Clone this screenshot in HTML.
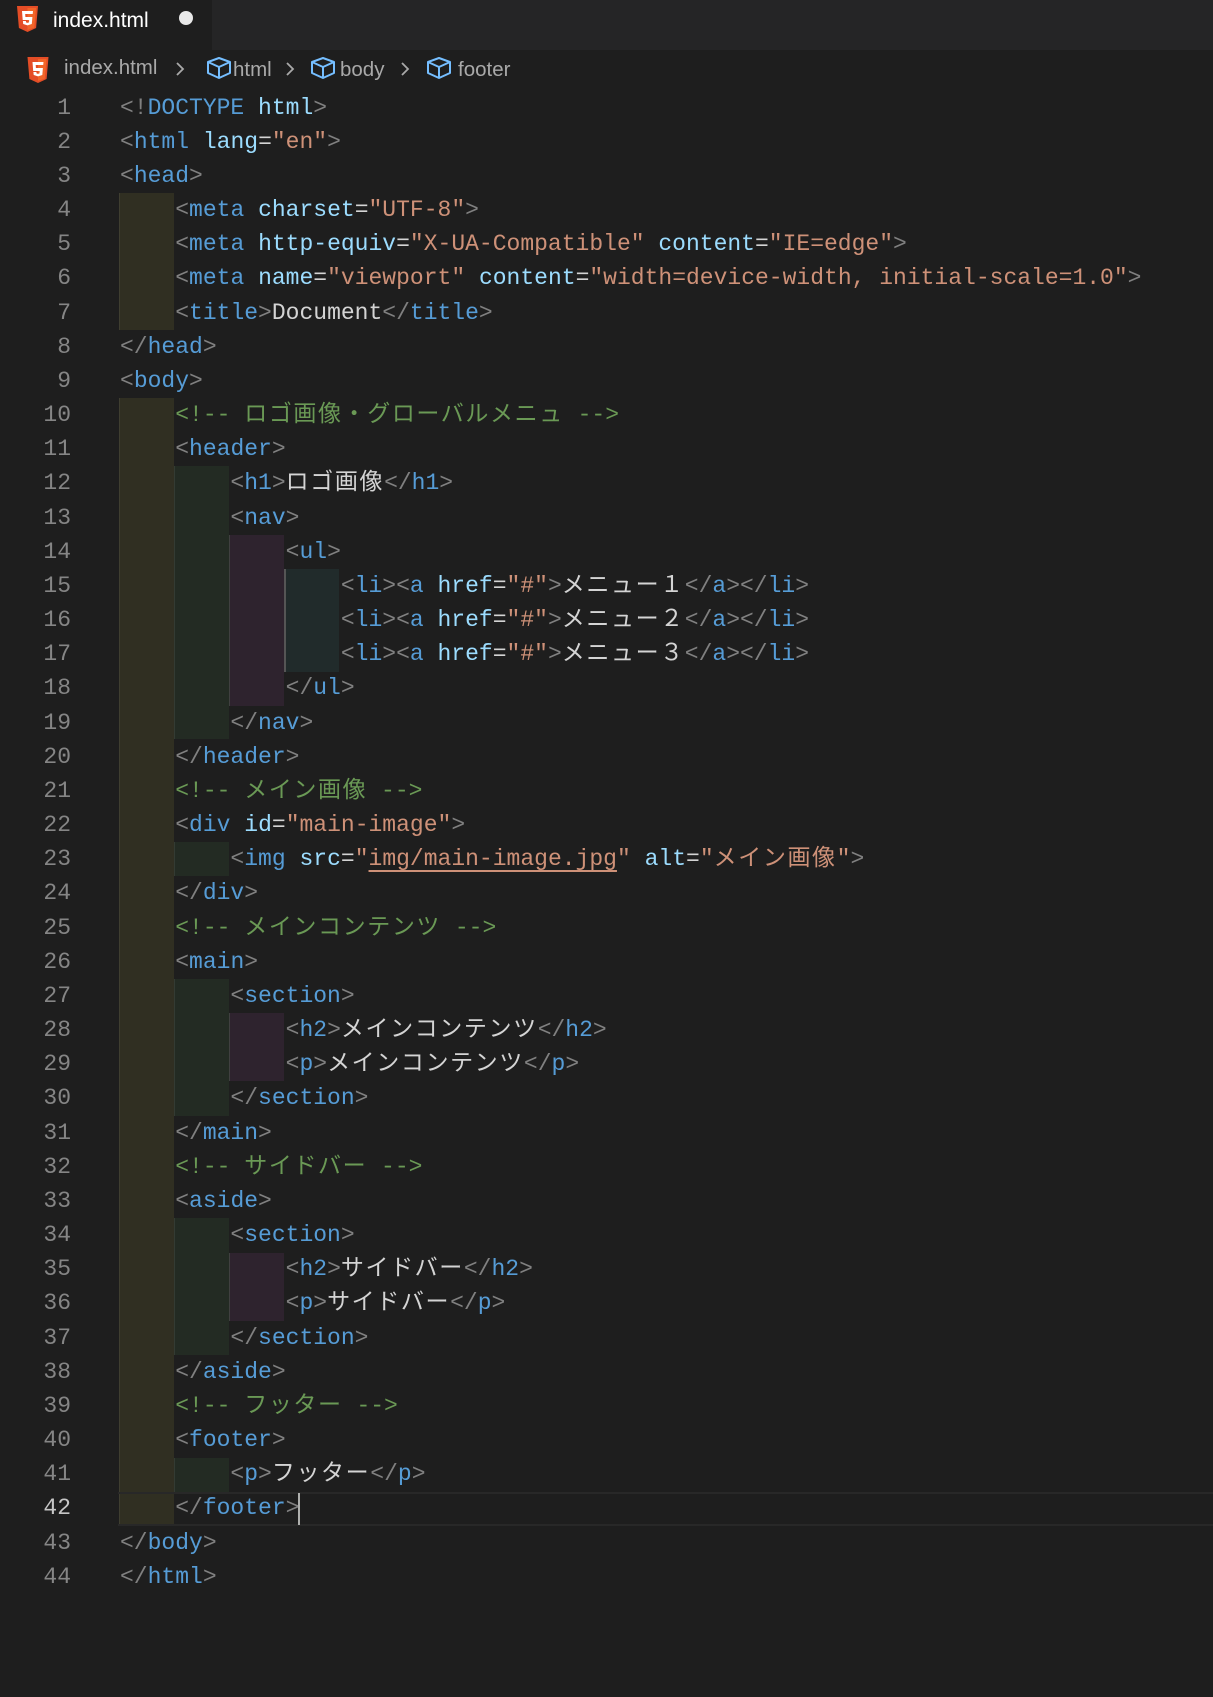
<!DOCTYPE html>
<html><head><meta charset="utf-8">
<style>
*{margin:0;padding:0;box-sizing:border-box}
body{width:1213px;height:1617px;background:#1e1e1e;overflow:hidden;position:relative;font-family:"Liberation Sans","Noto Sans CJK JP",sans-serif}
.tabbar{position:absolute;left:0;top:0;width:1213px;height:50px;background:#252526}
.tab{position:absolute;left:0;top:0;width:212px;height:50px;background:#1e1e1e}
.tab .nm{position:absolute;left:53px;top:9px;font-size:21px;color:#ffffff}
.dot{position:absolute;left:179px;top:11px;width:14px;height:14px;border-radius:50%;background:#e8e8e8}
.bc{position:absolute;left:64px;top:56px;font-size:20.5px;color:#a9a9a9;white-space:nowrap}
.h5{position:absolute}
.code{position:absolute;left:0;top:90.5px;font-family:"Liberation Mono","Noto Sans CJK JP",monospace;font-size:23px;line-height:34.17px;white-space:pre}
.ln{position:absolute;left:0;width:71px;text-align:right;color:#858585;font-size:23px;font-family:"Liberation Mono",monospace;line-height:34.17px}
.ln.cur{color:#c6c6c6}
.l{position:absolute;left:120px;height:34.17px;color:#d4d4d4}
.b{color:#808080}.t{color:#569cd6}.a{color:#9cdcfe}.s{color:#ce9178}.c{color:#6a9955}.x{color:#d4d4d4}
.j{letter-spacing:1.6px}
.u{text-decoration:underline;text-underline-offset:5px}
.band{position:absolute;width:55.3px}
.b1{background:#302f22;border-left:1px solid #3f3e30}
.b2{background:#232b23;border-left:1px solid #333b33}
.b3{background:#2e232e;border-left:1px solid #404040}
.b4{background:#212b2b;border-left:2px solid #555}
.curline{position:absolute;left:118px;top:1492px;width:1095px;height:34px;border-top:2px solid #282828;border-bottom:2px solid #282828}
.caret{position:absolute;left:298px;top:1493px;width:2px;height:32px;background:#aeafad}
</style></head><body>
<div class="tabbar"><div class="tab">
<svg class="h5" style="left:17px;top:6px" width="21" height="26" viewBox="0 0 21 26"><path d="M0 0h21l-1.9 22L10.5 26 1.9 22z" fill="#e44d26"/><path d="M10.5 2v22l6.8-2.4L19 2z" fill="#f16529"/><path d="M5 5h11l-.3 3H8.2l.2 3h7l-.6 7-4.3 1.4-4.3-1.4-.3-3h3l.1 1.4 1.5.5 1.5-.5.2-2.4H5.7z" fill="#fff"/></svg>
<span class="nm">index.html</span><div class="dot"></div></div></div>

<svg class="h5" style="left:27px;top:57px" width="22" height="26" viewBox="0 0 21 26"><path d="M0 0h21l-1.9 22L10.5 26 1.9 22z" fill="#e44d26"/><path d="M10.5 2v22l6.8-2.4L19 2z" fill="#f16529"/><path d="M5 5h11l-.3 3H8.2l.2 3h7l-.6 7-4.3 1.4-4.3-1.4-.3-3h3l.1 1.4 1.5.5 1.5-.5.2-2.4H5.7z" fill="#fff"/></svg>
<div class="bc">index.html</div>
<svg style="position:absolute;left:0;top:54px" width="560" height="32">
<g fill="none" stroke="#a9a9a9" stroke-width="1.8"><path d="M177 9l6 6-6 6"/><path d="M287 9l6 6-6 6"/><path d="M402 9l6 6-6 6"/></g>
<g fill="none" stroke="#75beff" stroke-width="2" stroke-linejoin="round">
<path d="M208 8l11-4 11 4v11l-11 5-11-5z M208 8l11 5 11-5 M219 13v11"/>
<path d="M312 8l11-4 11 4v11l-11 5-11-5z M312 8l11 5 11-5 M323 13v11"/>
<path d="M428 8l11-4 11 4v11l-11 5-11-5z M428 8l11 5 11-5 M439 13v11"/>
</g>
<g fill="#a9a9a9" font-family="Liberation Sans, sans-serif" font-size="20.5"><text x="233" y="22">html</text><text x="340" y="22">body</text><text x="458" y="22">footer</text></g>
</svg>

<div class="band b1" style="left:119px;top:193px;height:137px"></div>
<div class="band b1" style="left:119px;top:398px;height:1128px"></div>
<div class="band b2" style="left:174px;top:466px;height:273px"></div>
<div class="band b2" style="left:174px;top:842px;height:34px"></div>
<div class="band b2" style="left:174px;top:979px;height:137px"></div>
<div class="band b2" style="left:174px;top:1218px;height:137px"></div>
<div class="band b2" style="left:174px;top:1458px;height:34px"></div>
<div class="band b3" style="left:229px;top:535px;height:171px"></div>
<div class="band b3" style="left:229px;top:1013px;height:68px"></div>
<div class="band b3" style="left:229px;top:1253px;height:68px"></div>
<div class="band b4" style="left:284px;top:569px;height:103px"></div>
<div class="curline"></div>

<div class="code">
<div class="ln" style="top:0">1</div><div class="ln" style="top:34.17px">2</div><div class="ln" style="top:68.34px">3</div><div class="ln" style="top:102.51px">4</div><div class="ln" style="top:136.68px">5</div><div class="ln" style="top:170.85px">6</div><div class="ln" style="top:205.02px">7</div><div class="ln" style="top:239.19px">8</div><div class="ln" style="top:273.36px">9</div><div class="ln" style="top:307.53px">10</div><div class="ln" style="top:341.7px">11</div><div class="ln" style="top:375.87px">12</div><div class="ln" style="top:410.04px">13</div><div class="ln" style="top:444.21px">14</div><div class="ln" style="top:478.38px">15</div><div class="ln" style="top:512.55px">16</div><div class="ln" style="top:546.72px">17</div><div class="ln" style="top:580.89px">18</div><div class="ln" style="top:615.06px">19</div><div class="ln" style="top:649.23px">20</div><div class="ln" style="top:683.4px">21</div><div class="ln" style="top:717.57px">22</div><div class="ln" style="top:751.74px">23</div><div class="ln" style="top:785.91px">24</div><div class="ln" style="top:820.08px">25</div><div class="ln" style="top:854.25px">26</div><div class="ln" style="top:888.42px">27</div><div class="ln" style="top:922.59px">28</div><div class="ln" style="top:956.76px">29</div><div class="ln" style="top:990.93px">30</div><div class="ln" style="top:1025.1px">31</div><div class="ln" style="top:1059.27px">32</div><div class="ln" style="top:1093.44px">33</div><div class="ln" style="top:1127.61px">34</div><div class="ln" style="top:1161.78px">35</div><div class="ln" style="top:1195.95px">36</div><div class="ln" style="top:1230.12px">37</div><div class="ln" style="top:1264.29px">38</div><div class="ln" style="top:1298.46px">39</div><div class="ln" style="top:1332.63px">40</div><div class="ln" style="top:1366.8px">41</div><div class="ln cur" style="top:1400.97px">42</div><div class="ln" style="top:1435.14px">43</div><div class="ln" style="top:1469.31px">44</div>

<div class="l" style="top:0"><span class="b">&lt;!</span><span class="t">DOCTYPE</span> <span class="a">html</span><span class="b">&gt;</span></div>
<div class="l" style="top:34.17px"><span class="b">&lt;</span><span class="t">html</span> <span class="a">lang</span>=<span class="s">"en"</span><span class="b">&gt;</span></div>
<div class="l" style="top:68.34px"><span class="b">&lt;</span><span class="t">head</span><span class="b">&gt;</span></div>
<div class="l" style="top:102.51px">    <span class="b">&lt;</span><span class="t">meta</span> <span class="a">charset</span>=<span class="s">"UTF-8"</span><span class="b">&gt;</span></div>
<div class="l" style="top:136.68px">    <span class="b">&lt;</span><span class="t">meta</span> <span class="a">http-equiv</span>=<span class="s">"X-UA-Compatible"</span> <span class="a">content</span>=<span class="s">"IE=edge"</span><span class="b">&gt;</span></div>
<div class="l" style="top:170.85px">    <span class="b">&lt;</span><span class="t">meta</span> <span class="a">name</span>=<span class="s">"viewport"</span> <span class="a">content</span>=<span class="s">"width=device-width, initial-scale=1.0"</span><span class="b">&gt;</span></div>
<div class="l" style="top:205.02px">    <span class="b">&lt;</span><span class="t">title</span><span class="b">&gt;</span>Document<span class="b">&lt;/</span><span class="t">title</span><span class="b">&gt;</span></div>
<div class="l" style="top:239.19px"><span class="b">&lt;/</span><span class="t">head</span><span class="b">&gt;</span></div>
<div class="l" style="top:273.36px"><span class="b">&lt;</span><span class="t">body</span><span class="b">&gt;</span></div>
<div class="l" style="top:307.53px">    <span class="c">&lt;!-- <span class="j">ロゴ画像・グローバルメニュ</span> --&gt;</span></div>
<div class="l" style="top:341.7px">    <span class="b">&lt;</span><span class="t">header</span><span class="b">&gt;</span></div>
<div class="l" style="top:375.87px">        <span class="b">&lt;</span><span class="t">h1</span><span class="b">&gt;</span><span class="j">ロゴ画像</span><span class="b">&lt;/</span><span class="t">h1</span><span class="b">&gt;</span></div>
<div class="l" style="top:410.04px">        <span class="b">&lt;</span><span class="t">nav</span><span class="b">&gt;</span></div>
<div class="l" style="top:444.21px">            <span class="b">&lt;</span><span class="t">ul</span><span class="b">&gt;</span></div>
<div class="l" style="top:478.38px">                <span class="b">&lt;</span><span class="t">li</span><span class="b">&gt;&lt;</span><span class="t">a</span> <span class="a">href</span>=<span class="s">"#"</span><span class="b">&gt;</span><span class="j">メニュー１</span><span class="b">&lt;/</span><span class="t">a</span><span class="b">&gt;&lt;/</span><span class="t">li</span><span class="b">&gt;</span></div>
<div class="l" style="top:512.55px">                <span class="b">&lt;</span><span class="t">li</span><span class="b">&gt;&lt;</span><span class="t">a</span> <span class="a">href</span>=<span class="s">"#"</span><span class="b">&gt;</span><span class="j">メニュー２</span><span class="b">&lt;/</span><span class="t">a</span><span class="b">&gt;&lt;/</span><span class="t">li</span><span class="b">&gt;</span></div>
<div class="l" style="top:546.72px">                <span class="b">&lt;</span><span class="t">li</span><span class="b">&gt;&lt;</span><span class="t">a</span> <span class="a">href</span>=<span class="s">"#"</span><span class="b">&gt;</span><span class="j">メニュー３</span><span class="b">&lt;/</span><span class="t">a</span><span class="b">&gt;&lt;/</span><span class="t">li</span><span class="b">&gt;</span></div>
<div class="l" style="top:580.89px">            <span class="b">&lt;/</span><span class="t">ul</span><span class="b">&gt;</span></div>
<div class="l" style="top:615.06px">        <span class="b">&lt;/</span><span class="t">nav</span><span class="b">&gt;</span></div>
<div class="l" style="top:649.23px">    <span class="b">&lt;/</span><span class="t">header</span><span class="b">&gt;</span></div>
<div class="l" style="top:683.4px">    <span class="c">&lt;!-- <span class="j">メイン画像</span> --&gt;</span></div>
<div class="l" style="top:717.57px">    <span class="b">&lt;</span><span class="t">div</span> <span class="a">id</span>=<span class="s">"main-image"</span><span class="b">&gt;</span></div>
<div class="l" style="top:751.74px">        <span class="b">&lt;</span><span class="t">img</span> <span class="a">src</span>=<span class="s">"<span class="u">img/main-image.jpg</span>"</span> <span class="a">alt</span>=<span class="s">"<span class="j">メイン画像</span>"</span><span class="b">&gt;</span></div>
<div class="l" style="top:785.91px">    <span class="b">&lt;/</span><span class="t">div</span><span class="b">&gt;</span></div>
<div class="l" style="top:820.08px">    <span class="c">&lt;!-- <span class="j">メインコンテンツ</span> --&gt;</span></div>
<div class="l" style="top:854.25px">    <span class="b">&lt;</span><span class="t">main</span><span class="b">&gt;</span></div>
<div class="l" style="top:888.42px">        <span class="b">&lt;</span><span class="t">section</span><span class="b">&gt;</span></div>
<div class="l" style="top:922.59px">            <span class="b">&lt;</span><span class="t">h2</span><span class="b">&gt;</span><span class="j">メインコンテンツ</span><span class="b">&lt;/</span><span class="t">h2</span><span class="b">&gt;</span></div>
<div class="l" style="top:956.76px">            <span class="b">&lt;</span><span class="t">p</span><span class="b">&gt;</span><span class="j">メインコンテンツ</span><span class="b">&lt;/</span><span class="t">p</span><span class="b">&gt;</span></div>
<div class="l" style="top:990.93px">        <span class="b">&lt;/</span><span class="t">section</span><span class="b">&gt;</span></div>
<div class="l" style="top:1025.1px">    <span class="b">&lt;/</span><span class="t">main</span><span class="b">&gt;</span></div>
<div class="l" style="top:1059.27px">    <span class="c">&lt;!-- <span class="j">サイドバー</span> --&gt;</span></div>
<div class="l" style="top:1093.44px">    <span class="b">&lt;</span><span class="t">aside</span><span class="b">&gt;</span></div>
<div class="l" style="top:1127.61px">        <span class="b">&lt;</span><span class="t">section</span><span class="b">&gt;</span></div>
<div class="l" style="top:1161.78px">            <span class="b">&lt;</span><span class="t">h2</span><span class="b">&gt;</span><span class="j">サイドバー</span><span class="b">&lt;/</span><span class="t">h2</span><span class="b">&gt;</span></div>
<div class="l" style="top:1195.95px">            <span class="b">&lt;</span><span class="t">p</span><span class="b">&gt;</span><span class="j">サイドバー</span><span class="b">&lt;/</span><span class="t">p</span><span class="b">&gt;</span></div>
<div class="l" style="top:1230.12px">        <span class="b">&lt;/</span><span class="t">section</span><span class="b">&gt;</span></div>
<div class="l" style="top:1264.29px">    <span class="b">&lt;/</span><span class="t">aside</span><span class="b">&gt;</span></div>
<div class="l" style="top:1298.46px">    <span class="c">&lt;!-- <span class="j">フッター</span> --&gt;</span></div>
<div class="l" style="top:1332.63px">    <span class="b">&lt;</span><span class="t">footer</span><span class="b">&gt;</span></div>
<div class="l" style="top:1366.8px">        <span class="b">&lt;</span><span class="t">p</span><span class="b">&gt;</span><span class="j">フッター</span><span class="b">&lt;/</span><span class="t">p</span><span class="b">&gt;</span></div>
<div class="l" style="top:1400.97px">    <span class="b">&lt;/</span><span class="t">footer</span><span class="b">&gt;</span></div>
<div class="l" style="top:1435.14px"><span class="b">&lt;/</span><span class="t">body</span><span class="b">&gt;</span></div>
<div class="l" style="top:1469.31px"><span class="b">&lt;/</span><span class="t">html</span><span class="b">&gt;</span></div>
</div>
<div class="caret"></div>
</body></html>
